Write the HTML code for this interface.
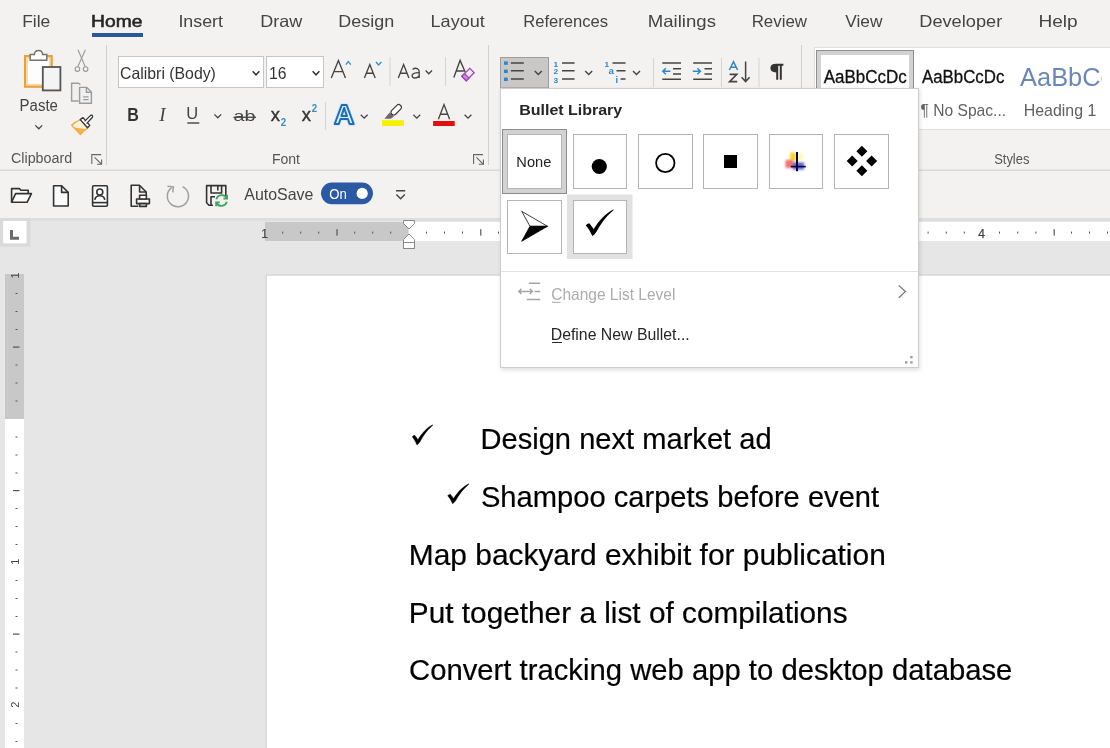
<!DOCTYPE html>
<html><head><meta charset="utf-8"><style>
html,body{margin:0;padding:0;width:1110px;height:748px;overflow:hidden;background:#e6e6e6}
svg{position:absolute;left:0;top:0;display:block;will-change:transform}
text{white-space:pre}
</style></head><body>
<svg width="1110" height="748" viewBox="0 0 1110 748">
<!-- ribbon background -->
<rect x="0" y="0" width="1110" height="218" fill="#f3f2f1"/>
<rect x="0" y="169.5" width="1110" height="1.5" fill="#dcdad8"/>
<!-- doc canvas -->
<rect x="0" y="218" width="1110" height="530" fill="#e6e6e6"/>
<rect x="0" y="218" width="1110" height="3" fill="#dedede"/>
<!-- home underline -->
<rect x="92" y="33" width="51" height="4" fill="#2b579a"/>
<!-- group separators -->
<rect x="106" y="45" width="1" height="120" fill="#d2d0ce"/>
<rect x="488" y="45" width="1" height="120" fill="#d2d0ce"/>
<rect x="801" y="45" width="1" height="120" fill="#d2d0ce"/>
<!-- small separators -->
<g fill="#d6d4d2">
<rect x="389.5" y="57" width="1" height="29"/>
<rect x="445" y="57" width="1" height="29"/>
<rect x="325" y="102" width="1" height="28"/>
<rect x="653" y="58" width="1" height="29"/>
<rect x="721" y="58" width="1" height="29"/>
<rect x="758.5" y="58" width="1" height="29"/>
</g>

<!-- ===== Clipboard group ===== -->
<g>
 <rect x="25.2" y="56.2" width="26.4" height="30.4" fill="#fdfdfd" stroke="#e9a03b" stroke-width="2.4"/>
 <rect x="27.2" y="58.2" width="22.4" height="26.4" fill="none" stroke="#fcd9a0" stroke-width="1.4"/>
 <path d="M30.2 60.2 V54.4 H34.4 Q34.6 50.4 38.5 50.4 Q42.4 50.4 42.6 54.4 H46.8 V60.2 Z" fill="#fdfdfd" stroke="#737373" stroke-width="1.5"/>
 <rect x="42.8" y="67" width="17.6" height="23.4" fill="#f4f4f4" stroke="#555555" stroke-width="1.8"/>
</g>
<!-- chevron under paste -->
<path d="M35.4 125.4 L38.8 128.8 L42.2 125.4" fill="none" stroke="#444" stroke-width="1.3"/>
<!-- scissors -->
<g fill="none" stroke="#9a9a9a" stroke-width="1.1">
 <path d="M78 49.8 L85.2 66.8"/>
 <path d="M85.4 49.8 L77.8 66.8"/>
 <circle cx="77.4" cy="69.1" r="2.3"/>
 <circle cx="85.6" cy="69.1" r="2.3"/>
</g>
<!-- copy -->
<g fill="none" stroke="#9c9c9c" stroke-width="1.4">
 <path d="M78.6 101 H71.6 V83.2 H78.4 L80.4 84.6" fill="#f0f0f0"/>
 <path d="M79.6 87.4 H86.8 L91.4 92 V103.2 H79.6 Z" fill="#f0f0f0"/>
 <path d="M86.4 87.6 V92.2 H91.4"/>
 <path d="M83.2 96.8 H88.6 M83.2 99.6 H88.6" stroke-width="1.2"/>
</g>
<!-- format painter -->
<g stroke-linejoin="round">
 <path d="M80.4 119.8 Q75.4 121.6 71.6 125.2 L80.4 134.6 Q83.8 130.8 87.6 128 Z" fill="#fff0d8" stroke="#eaa43f" stroke-width="1.2"/>
 <path d="M73.6 127.4 Q80 127.8 86.4 129.2 L80.4 134.4 Z" fill="#f5b24c"/>
 <path d="M80.2 119.6 L83 117.6 L89.8 125.4 L87.6 127.8 Z" fill="#fff" stroke="#333" stroke-width="1.3"/>
 <path d="M84.6 121.4 L90.6 115.4 Q92 114.6 92.6 116 Q92.8 117 92 117.8 L86.6 123.6" fill="#fff" stroke="#333" stroke-width="1.3"/>
</g>
<!-- dialog launchers -->
<g fill="none" stroke="#666" stroke-width="1.1">
 <path d="M91.8 164 V154.6 H101.2"/><path d="M94.6 157.4 L101.4 164.2 M101.6 159.6 V164.2 H97"/>
 <path d="M473.6 164 V154.6 H483"/><path d="M476.4 157.4 L483.2 164.2 M483.4 159.6 V164.2 H478.8"/>
</g>

<!-- ===== Font group ===== -->
<rect x="118.5" y="56.5" width="145" height="31" fill="#ffffff" stroke="#c8c6c4"/>
<rect x="266.5" y="56.5" width="57" height="31" fill="#ffffff" stroke="#c8c6c4"/>
<g fill="none" stroke="#333" stroke-width="1.5">
 <path d="M252.6 71.2 L256 74.8 L259.4 71.2"/>
 <path d="M312.6 71.2 L316 74.8 L319.4 71.2"/>
</g>
<!-- grow/shrink font -->
<g fill="none" stroke="#444" stroke-width="1.35">
 <path d="M331.3 78 L338.4 60.6 L345.5 78 M333.9 71.6 H342.9"/>
 <path d="M364.4 78 L369.8 64.6 L375.2 78 M366.4 73.2 H373.2"/>
 <path d="M398.3 78 L403.6 64.6 L408.9 78 M400.3 73.2 H407"/>
</g>
<g fill="none" stroke="#3b8fd0" stroke-width="1.4">
 <path d="M345.8 64.6 L348.3 61.6 L350.8 64.6"/>
 <path d="M376 62 L378.6 65 L381.4 62"/>
</g>
<!-- Aa small a -->
<g fill="none" stroke="#444" stroke-width="1.35">
 <path d="M412.6 69.4 Q415 67.4 417.6 68.8 Q419.2 69.8 419.2 72 V78 M419.2 72.6 Q413.4 72.4 412.2 75 Q411.8 78 415 78 Q418 78 419.2 75.6"/>
 <path d="M425.6 70.6 L428.8 73.8 L432 70.6"/>
</g>
<!-- clear formatting -->
<path d="M453.8 77.6 L460.1 60.4 L465.4 72.6 M456.3 71 H463.8" fill="none" stroke="#444" stroke-width="1.35"/>
<g transform="translate(468 74.6) rotate(-45)">
 <rect x="-5.6" y="-3.1" width="11.2" height="6.2" fill="#fcf0ff" stroke="#a043b6" stroke-width="1.3"/>
 <rect x="-5.6" y="-3.1" width="3.8" height="6.2" fill="#d889e6" stroke="#a043b6" stroke-width="1.3"/>
</g>
<!-- B I U -->
<text x="127.2" y="120.8" font-family="Liberation Sans" font-weight="700" font-size="18.5" fill="#333" textLength="11.6" lengthAdjust="spacingAndGlyphs">B</text>
<text x="159.2" y="120.8" font-family="Liberation Serif" font-style="italic" font-size="19" fill="#444">I</text>
<text x="186.2" y="118.9" font-family="Liberation Sans" font-size="16.5" fill="#444">U</text>
<rect x="187.3" y="122.3" width="12" height="1.4" fill="#444"/>
<path d="M214.4 114.4 L217.8 117.8 L221.2 114.4" fill="none" stroke="#444" stroke-width="1.3"/>
<text x="233.6" y="121.4" font-family="Liberation Sans" font-size="15" fill="#444" textLength="22" lengthAdjust="spacingAndGlyphs">ab</text>
<rect x="233.4" y="116.6" width="22.6" height="1.3" fill="#444"/>
<text x="270.8" y="120.8" font-family="Liberation Sans" font-size="18.4" fill="#333" stroke="#333" stroke-width="0.4" textLength="9.2" lengthAdjust="spacingAndGlyphs">x</text>
<text x="280.8" y="126" font-family="Liberation Sans" font-weight="700" font-size="10" fill="#3a8cc8" textLength="5.4" lengthAdjust="spacingAndGlyphs">2</text>
<text x="301.8" y="120.8" font-family="Liberation Sans" font-size="18.4" fill="#333" stroke="#333" stroke-width="0.4" textLength="9.2" lengthAdjust="spacingAndGlyphs">x</text>
<text x="311.8" y="111.6" font-family="Liberation Sans" font-weight="700" font-size="10" fill="#3a8cc8" textLength="5.4" lengthAdjust="spacingAndGlyphs">2</text>
<!-- text effects -->
<text x="333.9" y="123.6" font-family="Liberation Sans" font-weight="700" font-size="27.5" fill="none" stroke="#c9e6fa" stroke-width="3.6" stroke-linejoin="round" textLength="20.4" lengthAdjust="spacingAndGlyphs">A</text>
<text x="333.9" y="123.6" font-family="Liberation Sans" font-weight="700" font-size="27.5" fill="#d6f0ff" stroke="#1f6cb5" stroke-width="1.9" stroke-linejoin="round" textLength="20.4" lengthAdjust="spacingAndGlyphs">A</text>
<path d="M360.8 114.8 L364.2 118.2 L367.6 114.8" fill="none" stroke="#444" stroke-width="1.3"/>
<!-- highlighter -->
<rect x="382" y="120.2" width="22" height="5.8" fill="#f5f200"/>
<path d="M389.6 112.4 L384.4 118.8 H390.6 L394 116.4 Z" fill="#6a6a6a"/>
<g transform="translate(394.8 111.2) rotate(-45)">
 <rect x="-4.2" y="-2.7" width="12.4" height="5.4" rx="2.6" fill="#fff" stroke="#3a3a3a" stroke-width="1.2"/>
</g>
<path d="M413.4 114.8 L416.8 118.2 L420.2 114.8" fill="none" stroke="#444" stroke-width="1.3"/>
<!-- font color -->
<path d="M438.4 119.2 L444 104.6 L449.6 119.2 M440.4 114.2 H447.6" fill="none" stroke="#444" stroke-width="1.35"/>
<rect x="433.1" y="121" width="21.6" height="5" fill="#e30e0e"/>
<path d="M464.6 114.8 L468 118.2 L471.4 114.8" fill="none" stroke="#444" stroke-width="1.3"/>

<!-- ===== Paragraph group ===== -->
<rect x="500.5" y="57.5" width="48" height="30.5" fill="#c9c8c6" stroke="#9f9d9b"/>
<g fill="#2e86c9">
 <rect x="504" y="61.4" width="3.8" height="3.4"/><rect x="504" y="69.6" width="3.8" height="3.4"/><rect x="504" y="77.6" width="3.8" height="3.4"/>
</g>
<g stroke="#444" stroke-width="1.5">
 <path d="M510.9 62.9 H523.8 M510.9 70.8 H523.8 M510.9 79 H523.8"/>
 <path d="M562 62.9 H574.6 M562 70.8 H574.6 M562 79 H574.6"/>
 <path d="M612.5 62.9 H625.5 M616.5 70.8 H625.5 M620.6 79 H625.5"/>
 <path d="M662.3 62.9 H681 M673 68.7 H681 M673 74 H681 M662.3 79.2 H681"/>
 <path d="M693.2 62.9 H712 M704.5 68.7 H712 M704.5 74 H712 M693.2 79.2 H712"/>
</g>
<g fill="none" stroke="#444" stroke-width="1.4">
 <path d="M534.8 71 L538.3 74.6 L541.8 71"/>
 <path d="M585.2 71 L588.7 74.6 L592.2 71"/>
 <path d="M633 71 L636.5 74.6 L640 71"/>
</g>
<g font-family="Liberation Sans" font-weight="700" fill="#2e86c9">
 <text x="553.6" y="66.5" font-size="8" textLength="4.6" lengthAdjust="spacingAndGlyphs">1</text>
 <text x="553.6" y="74.4" font-size="8" textLength="4.6" lengthAdjust="spacingAndGlyphs">2</text>
 <text x="553.6" y="82.6" font-size="8" textLength="4.6" lengthAdjust="spacingAndGlyphs">3</text>
 <text x="604.6" y="66.5" font-size="8" textLength="4.6" lengthAdjust="spacingAndGlyphs">1</text>
 <text x="608.4" y="74.4" font-size="9.4" textLength="5.4" lengthAdjust="spacingAndGlyphs">a</text>
 <text x="615.6" y="82.6" font-size="9.4">i</text>
</g>
<g fill="none" stroke="#2e86c9" stroke-width="1.5">
 <path d="M662.8 71.2 H670.4 M665.8 68.2 L662.8 71.2 L665.8 74.2"/>
 <path d="M692.8 71.2 H700.4 M697.4 68.2 L700.4 71.2 L697.4 74.2"/>
</g>
<!-- sort -->
<path d="M729.4 70 L733.5 61.6 L737.6 70 M730.8 67.2 H736.2" fill="none" stroke="#2e86c9" stroke-width="1.5"/>
<path d="M729.6 74.4 H736.8 L729.6 81.6 H737.2" fill="none" stroke="#444" stroke-width="1.6"/>
<path d="M745.6 61.6 V81.4 M741.6 77.2 L745.6 81.6 L749.6 77.2" fill="none" stroke="#444" stroke-width="1.5"/>
<!-- pilcrow -->
<g fill="#333">
 <path d="M776.2 63.8 H783.4 V65.8 H781.8 V79.8 H779.8 V65.8 H778.2 V79.8 H776.2 V72.4 Q770.4 72.4 770.4 68.1 Q770.4 63.8 776.2 63.8 Z"/>
</g>

<!-- ===== Styles gallery ===== -->
<rect x="814.5" y="47.5" width="310" height="82" fill="#ffffff" stroke="#e1dfdd"/>
<rect x="819" y="53" width="92" height="80" fill="none" stroke="#d2d2d2" stroke-width="4"/>
<rect x="816.5" y="50.5" width="97" height="84" fill="none" stroke="#8f8f8f" stroke-width="1"/>
<defs><clipPath id="hclip"><rect x="1000" y="50" width="102" height="60"/></clipPath></defs>

<!-- ===== QAT ===== -->
<g fill="none" stroke="#333" stroke-width="1.6" stroke-linejoin="round">
 <!-- folder -->
 <path d="M11.6 202.2 V188.6 H19.4 L20.9 190.2 H28.2 V193.4" fill="#f6f6f6"/>
 <path d="M11.6 202.2 L15.6 193.6 H31.4 L27.2 202.2 Z" fill="#fbfbfb"/>
 <!-- new doc -->
 <path d="M53.6 185.8 H61.6 L68.2 192.4 V206 H53.6 Z" fill="#fbfbfb"/>
 <path d="M61.6 185.8 V192.4 H68.2"/>
 <!-- contact -->
 <rect x="92.6" y="185.8" width="14.8" height="20.4" rx="1" fill="#fbfbfb"/>
 <path d="M92.6 202.6 H107.4" />
 <circle cx="99.8" cy="192" r="3" />
 <path d="M94.8 199.8 Q95.6 195.8 99.8 195.8 Q104 195.8 104.8 199.8"/>
 <!-- print preview -->
 <path d="M138.2 206.2 H131.2 V185.2 H139.4 L146.2 192 V195"/>
 <path d="M139.6 185.4 V192 H146.2"/>
 <rect x="136.6" y="199" width="12.8" height="4.6" fill="#fbfbfb"/>
 <rect x="139.6" y="195.2" width="6.8" height="3.8" fill="#fbfbfb"/>
 <rect x="139.6" y="203.6" width="6.8" height="2.8" fill="#fbfbfb"/>
 <!-- save/sync -->
 <path d="M213 205.2 H209 L206.6 202.8 V185.6 H225.8 V197"/>
 <path d="M211 185.8 V193 H221.6 V185.8 M217.8 186 V190.6"/>
 <path d="M211 205 V196.8 H215"/>
</g>
<path d="M171.6 187.6 A10.6 10.6 0 1 0 182.6 186.6" fill="none" stroke="#a0a0a0" stroke-width="1.5"/>
<path d="M167.4 186.2 L173.4 186.8 L172.8 192.4" fill="none" stroke="#a0a0a0" stroke-width="1.5"/>
<g fill="none" stroke="#3ea65a" stroke-width="1.9">
 <path d="M216.4 199.2 A5.6 5.6 0 0 1 226.8 198.2"/>
 <path d="M226.8 201.8 A5.6 5.6 0 0 1 216.4 202.8"/>
 <path d="M227 194.8 V198.6 H223.4 M216.2 206.2 V202.4 H219.8"/>
</g>
<!-- toggle -->
<rect x="321" y="182.5" width="52" height="21.7" rx="10.85" fill="#2c59a3"/>
<circle cx="362.2" cy="193.4" r="5.6" fill="#ffffff"/>
<path d="M396 190.8 H405.2 M396.4 194.4 L400.6 198.8 L404.8 194.4" fill="none" stroke="#444" stroke-width="1.4"/>

<!-- ===== rulers ===== -->
<rect x="265" y="222" width="845" height="19" fill="#ffffff"/>
<rect x="265" y="222" width="143.5" height="19" fill="#c8c8c8"/>
<g fill="#555">
 <rect x="282.2" y="231.6" width="1" height="2"/><rect x="300.2" y="231.6" width="1" height="2"/><rect x="318.2" y="231.6" width="1" height="2"/>
 <rect x="336.4" y="229.2" width="1.2" height="6.4"/>
 <rect x="354.2" y="231.6" width="1" height="2"/><rect x="372.2" y="231.6" width="1" height="2"/><rect x="390.2" y="231.6" width="1" height="2"/>
 <rect x="426" y="231.6" width="1" height="2"/><rect x="444" y="231.6" width="1" height="2"/><rect x="462" y="231.6" width="1" height="2"/>
 <rect x="480.2" y="229.2" width="1.2" height="6.4"/>
 <rect x="498" y="231.6" width="1" height="2"/>
 <rect x="927.6" y="231.6" width="1" height="2"/><rect x="945.8" y="231.6" width="1" height="2"/><rect x="963.8" y="231.6" width="1" height="2"/>
 <rect x="999" y="231.6" width="1" height="2"/><rect x="1017.2" y="231.6" width="1" height="2"/><rect x="1035.4" y="231.6" width="1" height="2"/>
 <rect x="1053.6" y="229.2" width="1.2" height="6.4"/>
 <rect x="1071" y="231.6" width="1" height="2"/><rect x="1089" y="231.6" width="1" height="2"/><rect x="1107" y="231.6" width="1" height="2"/>
</g>
<text x="261.2" y="237.6" font-family="Liberation Sans" font-size="12" fill="#444" stroke="#444" stroke-width="0.2">1</text>
<text x="978.2" y="237.6" font-family="Liberation Sans" font-size="12" fill="#444" stroke="#444" stroke-width="0.25">4</text>
<!-- indent markers -->
<g fill="#fff" stroke="#888" stroke-width="1">
 <path d="M403.5 220.5 H414.5 V223.5 L409 229 L403.5 223.5 Z"/>
 <path d="M409 234 L414.5 239.5 V242.5 H403.5 V239.5 Z"/>
 <rect x="403.5" y="242.5" width="11" height="6"/>
</g>
<!-- tab selector -->
<rect x="0" y="218" width="30.5" height="28.6" fill="#dadada"/>
<rect x="3.2" y="221" width="23.3" height="22.4" fill="#ffffff"/>
<path d="M10 230 h3 v6.7 h6 v3 h-9 z" fill="#6b6b6b"/>
<!-- vertical ruler -->
<rect x="5" y="274" width="19" height="474" fill="#ffffff"/>
<rect x="5" y="274" width="19" height="145" fill="#c8c8c8"/>
<g fill="#555">
 <rect x="15.5" y="293" width="2" height="1"/><rect x="15.5" y="311" width="2" height="1"/><rect x="15.5" y="329" width="2" height="1"/>
 <rect x="13" y="346.5" width="6.5" height="1.2"/>
 <rect x="15.5" y="364.5" width="2" height="1"/><rect x="15.5" y="382.5" width="2" height="1"/><rect x="15.5" y="400.5" width="2" height="1"/>
 <rect x="15.5" y="436.5" width="2" height="1"/><rect x="15.5" y="454.5" width="2" height="1"/><rect x="15.5" y="472.5" width="2" height="1"/>
 <rect x="13" y="490" width="6.5" height="1.2"/>
 <rect x="15.5" y="508" width="2" height="1"/><rect x="15.5" y="526" width="2" height="1"/><rect x="15.5" y="544" width="2" height="1"/>
 <rect x="15.5" y="580" width="2" height="1"/><rect x="15.5" y="598" width="2" height="1"/><rect x="15.5" y="616" width="2" height="1"/>
 <rect x="13" y="633.5" width="6.5" height="1.2"/>
 <rect x="15.5" y="651.5" width="2" height="1"/><rect x="15.5" y="669.5" width="2" height="1"/><rect x="15.5" y="687.5" width="2" height="1"/>
 <rect x="15.5" y="723" width="2" height="1"/><rect x="15.5" y="741" width="2" height="1"/>
</g>
<g font-family="Liberation Sans" font-size="11" fill="#444">
 <text transform="translate(18.6 275.4) rotate(-90)" text-anchor="middle">1</text>
 <text transform="translate(18.6 561.6) rotate(-90)" text-anchor="middle">1</text>
 <text transform="translate(18.6 704.6) rotate(-90)" text-anchor="middle">2</text>
</g>
<!-- page -->
<rect x="266.5" y="275.5" width="844" height="473" fill="#ffffff"/>
<rect x="266.2" y="275" width="850" height="480" fill="none" stroke="#d0d0d0"/>
<!-- doc checkmarks -->
<path transform="translate(412.2 424.8) scale(0.205 0.201)" d="M0 60 C3 56 8 52 12 52 C17 57 23 66 28 74 C45 45 70 15 100 0 C100 3 97 6 94 8 C72 28 52 55 38 84 C34 91 29 96 23 100 C17 85 9 70 0 60 Z" fill="#000" stroke="#000" stroke-width="2.2"/>
<path transform="translate(447.7 483.8) scale(0.211 0.199)" d="M0 60 C3 56 8 52 12 52 C17 57 23 66 28 74 C45 45 70 15 100 0 C100 3 97 6 94 8 C72 28 52 55 38 84 C34 91 29 96 23 100 C17 85 9 70 0 60 Z" fill="#000" stroke="#000" stroke-width="2.2"/>

<!-- ===== popup ===== -->
<defs><filter id="shd" x="-10%" y="-10%" width="120%" height="120%"><feGaussianBlur stdDeviation="2.2"/></filter></defs>
<rect x="501" y="89.5" width="419" height="280.5" fill="#000" opacity="0.13" filter="url(#shd)"/>
<rect x="500.5" y="88.5" width="418" height="279" fill="#ffffff" stroke="#cdcdcd"/>
<rect x="502.5" y="129.5" width="64" height="64" fill="#d2d2d2" stroke="#8c8c8c"/>
<rect x="567" y="194.5" width="65.5" height="64.5" fill="#e1e1e1"/>
<g fill="#ffffff" stroke="#b4b4b4">
<rect x="507.5" y="134.5" width="54" height="54"/>
<rect x="573.5" y="134.5" width="53" height="54"/>
<rect x="638.5" y="134.5" width="54" height="54"/>
<rect x="703.5" y="134.5" width="54" height="54"/>
<rect x="769.5" y="134.5" width="53" height="54"/>
<rect x="834.5" y="134.5" width="54" height="54"/>
<rect x="507.5" y="200.5" width="54" height="53"/>
<rect x="573.5" y="200.5" width="53" height="53"/>
</g>
<circle cx="599.3" cy="166.5" r="7.6" fill="#000"/>
<circle cx="665.3" cy="163" r="9.2" fill="none" stroke="#000" stroke-width="1.8"/>
<rect x="724" y="155" width="13" height="13" fill="#000"/>
<!-- colorful bullet -->
<defs><filter id="blr" x="-30%" y="-30%" width="160%" height="160%"><feGaussianBlur stdDeviation="0.9"/></filter></defs>
<g filter="url(#blr)">
 <rect x="790" y="152.6" width="6" height="9" fill="#f5d000" opacity="0.85"/>
 <rect x="798" y="153" width="5" height="8" fill="#fff3a0" opacity="0.7"/>
 <rect x="785.4" y="159.8" width="7.6" height="8.2" rx="1.5" fill="#f25050" opacity="0.8"/>
 <rect x="792.6" y="162.2" width="11.4" height="7.4" fill="#3030c8" opacity="0.75"/>
</g>
<rect x="796" y="152" width="2" height="19.2" fill="#0a0a30"/>
<rect x="790.8" y="165.8" width="15" height="1.6" fill="#0a0a30"/>
<!-- diamonds -->
<g fill="#000">
 <path d="M861.9 145.8 L867.4 151.3 L861.9 156.8 L856.4 151.3 Z"/>
 <path d="M852.2 155.5 L857.7 161 L852.2 166.5 L846.7 161 Z"/>
 <path d="M871.6 155.5 L877.1 161 L871.6 166.5 L866.1 161 Z"/>
 <path d="M861.9 165.3 L867.4 170.8 L861.9 176.3 L856.4 170.8 Z"/>
</g>
<!-- arrowhead -->
<path d="M521.7 211.3 L547.5 226.3 L530 226.3 Z" fill="#fff" stroke="#000" stroke-width="0.75"/>
<path d="M530 226.3 L547.5 226.3 L521.7 241.3 Z" fill="#000" stroke="#000" stroke-width="0.8" stroke-linejoin="round"/>
<!-- checkmark -->
<path transform="translate(585.9 209.3) scale(0.278 0.268)" d="M0 60 C3 56 8 52 12 52 C17 57 23 66 28 74 C45 45 70 15 100 0 C100 3 97 6 94 8 C72 28 52 55 38 84 C34 91 29 96 23 100 C17 85 9 70 0 60 Z" fill="#000"/>
<rect x="501" y="271" width="417" height="1" fill="#e1e1e1"/>
<!-- change list level icon -->
<g fill="none" stroke="#a6a6a6" stroke-width="1.5">
 <path d="M528.8 283.2 H540.2 M534.6 291.4 H540.2 M526.8 299.6 H540.2"/>
 <path d="M518.8 291.4 H532.4 M521.4 288.8 L518.8 291.4 L521.4 294 M529.8 288.8 L532.4 291.4 L529.8 294"/>
</g>
<path d="M898.8 285.4 L905.4 291.6 L898.8 297.8" fill="none" stroke="#777" stroke-width="1.3"/>
<g fill="#a0a0a0">
 <rect x="910.2" y="356" width="2.4" height="2.4"/><rect x="905" y="361.2" width="2.4" height="2.4"/><rect x="910.2" y="361.2" width="2.4" height="2.4"/>
</g>
<!-- underlines for mnemonic -->
<rect x="552" y="301.8" width="8.6" height="1" fill="#a6a6a6"/>
<rect x="552" y="342" width="10" height="1" fill="#262626"/>
<text x="22.20" y="27.10" font-family="Liberation Sans" font-size="16.5" font-weight="400" fill="#444444" textLength="28.13" lengthAdjust="spacingAndGlyphs" >File</text>
<text x="91.06" y="27.10" font-family="Liberation Sans" font-size="16.5" font-weight="400" fill="#262626" textLength="51.34" lengthAdjust="spacingAndGlyphs" stroke="#262626" stroke-width="0.55">Home</text>
<text x="178.40" y="27.10" font-family="Liberation Sans" font-size="16.5" font-weight="400" fill="#444444" textLength="44.57" lengthAdjust="spacingAndGlyphs" >Insert</text>
<text x="260.26" y="27.10" font-family="Liberation Sans" font-size="16.5" font-weight="400" fill="#444444" textLength="42.10" lengthAdjust="spacingAndGlyphs" >Draw</text>
<text x="338.36" y="27.10" font-family="Liberation Sans" font-size="16.5" font-weight="400" fill="#444444" textLength="55.95" lengthAdjust="spacingAndGlyphs" >Design</text>
<text x="430.55" y="27.10" font-family="Liberation Sans" font-size="16.5" font-weight="400" fill="#444444" textLength="54.31" lengthAdjust="spacingAndGlyphs" >Layout</text>
<text x="523.17" y="27.10" font-family="Liberation Sans" font-size="16.5" font-weight="400" fill="#444444" textLength="85.03" lengthAdjust="spacingAndGlyphs" >References</text>
<text x="647.81" y="27.10" font-family="Liberation Sans" font-size="16.5" font-weight="400" fill="#444444" textLength="68.14" lengthAdjust="spacingAndGlyphs" >Mailings</text>
<text x="751.65" y="27.10" font-family="Liberation Sans" font-size="16.5" font-weight="400" fill="#444444" textLength="55.42" lengthAdjust="spacingAndGlyphs" >Review</text>
<text x="845.30" y="27.10" font-family="Liberation Sans" font-size="16.5" font-weight="400" fill="#444444" textLength="37.16" lengthAdjust="spacingAndGlyphs" >View</text>
<text x="919.24" y="27.10" font-family="Liberation Sans" font-size="16.5" font-weight="400" fill="#444444" textLength="82.99" lengthAdjust="spacingAndGlyphs" >Developer</text>
<text x="1038.47" y="27.10" font-family="Liberation Sans" font-size="16.5" font-weight="400" fill="#444444" textLength="39.21" lengthAdjust="spacingAndGlyphs" >Help</text>
<text x="19.60" y="111.40" font-family="Liberation Sans" font-size="16" font-weight="400" fill="#444444" textLength="38.34" lengthAdjust="spacingAndGlyphs" >Paste</text>
<text x="10.98" y="163.40" font-family="Liberation Sans" font-size="14" font-weight="400" fill="#555555" textLength="61.22" lengthAdjust="spacingAndGlyphs" >Clipboard</text>
<text x="271.88" y="163.90" font-family="Liberation Sans" font-size="14" font-weight="400" fill="#555555" textLength="28.09" lengthAdjust="spacingAndGlyphs" >Font</text>
<text x="994.18" y="164.30" font-family="Liberation Sans" font-size="14" font-weight="400" fill="#555555" textLength="35.20" lengthAdjust="spacingAndGlyphs" >Styles</text>
<text x="120.11" y="79.30" font-family="Liberation Sans" font-size="16.5" font-weight="400" fill="#333333" textLength="95.73" lengthAdjust="spacingAndGlyphs" >Calibri (Body)</text>
<text x="269.10" y="79.30" font-family="Liberation Sans" font-size="16.5" font-weight="400" fill="#333333" textLength="17.47" lengthAdjust="spacingAndGlyphs" >16</text>
<text x="823.80" y="83.40" font-family="Liberation Sans" font-size="17.5" font-weight="400" fill="#111111" textLength="82.94" lengthAdjust="spacingAndGlyphs" stroke="#111" stroke-width="0.3">AaBbCcDc</text>
<text x="922.00" y="83.40" font-family="Liberation Sans" font-size="17.5" font-weight="400" fill="#111111" textLength="82.34" lengthAdjust="spacingAndGlyphs" stroke="#111" stroke-width="0.3">AaBbCcDc</text>
<text x="920.53" y="115.70" font-family="Liberation Sans" font-size="15.7" font-weight="400" fill="#606060" textLength="85.54" lengthAdjust="spacingAndGlyphs" >¶ No Spac...</text>
<text x="1023.73" y="115.80" font-family="Liberation Sans" font-size="15.7" font-weight="400" fill="#606060" textLength="72.61" lengthAdjust="spacingAndGlyphs" >Heading 1</text>
<text x="1020.10" y="85.90" font-family="Liberation Sans" font-size="26.6" font-weight="400" fill="#6a87ba" textLength="93.22" lengthAdjust="spacingAndGlyphs" clip-path="url(#hclip)">AaBbCc</text>
<text x="244.30" y="199.80" font-family="Liberation Sans" font-size="16.5" font-weight="400" fill="#444444" textLength="69.18" lengthAdjust="spacingAndGlyphs" >AutoSave</text>
<text x="329.17" y="198.80" font-family="Liberation Sans" font-size="14" font-weight="400" fill="#ffffff" textLength="17.57" lengthAdjust="spacingAndGlyphs" >On</text>
<text x="519.24" y="114.60" font-family="Liberation Sans" font-size="15.5" font-weight="700" fill="#262626" textLength="103.00" lengthAdjust="spacingAndGlyphs" >Bullet Library</text>
<text x="516.33" y="167.00" font-family="Liberation Sans" font-size="15" font-weight="400" fill="#222222" textLength="35.00" lengthAdjust="spacingAndGlyphs" >None</text>
<text x="551.22" y="299.60" font-family="Liberation Sans" font-size="16.5" font-weight="400" fill="#acacac" textLength="124.14" lengthAdjust="spacingAndGlyphs" >Change List Level</text>
<text x="550.73" y="339.80" font-family="Liberation Sans" font-size="16.5" font-weight="400" fill="#262626" textLength="138.96" lengthAdjust="spacingAndGlyphs" >Define New Bullet...</text>
<text x="480.47" y="448.70" font-family="Liberation Sans" font-size="29.5" font-weight="400" fill="#000000" textLength="291.16" lengthAdjust="spacingAndGlyphs" stroke="#000" stroke-width="0.2">Design next market ad</text>
<text x="480.94" y="506.50" font-family="Liberation Sans" font-size="29.5" font-weight="400" fill="#000000" textLength="398.20" lengthAdjust="spacingAndGlyphs" stroke="#000" stroke-width="0.2">Shampoo carpets before event</text>
<text x="408.81" y="564.70" font-family="Liberation Sans" font-size="29.5" font-weight="400" fill="#000000" textLength="476.97" lengthAdjust="spacingAndGlyphs" stroke="#000" stroke-width="0.2">Map backyard exhibit for publication</text>
<text x="408.82" y="622.50" font-family="Liberation Sans" font-size="29.5" font-weight="400" fill="#000000" textLength="438.78" lengthAdjust="spacingAndGlyphs" stroke="#000" stroke-width="0.2">Put together a list of compilations</text>
<text x="409.04" y="680.00" font-family="Liberation Sans" font-size="29.5" font-weight="400" fill="#000000" textLength="603.32" lengthAdjust="spacingAndGlyphs" stroke="#000" stroke-width="0.2">Convert tracking web app to desktop database</text>

</svg>
</body></html>
